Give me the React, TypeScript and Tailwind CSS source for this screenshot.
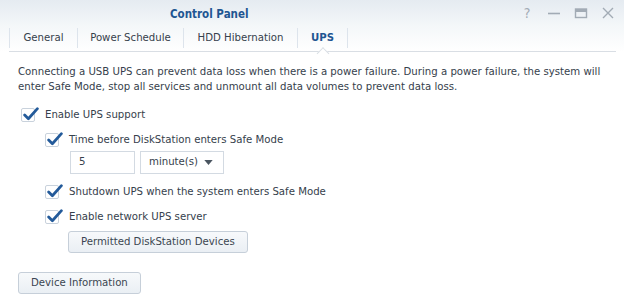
import React from "react";

function Check({ label }: { label: string }) {
  return (
    <div className="flex h-[16px] items-center gap-[10px]">
      <span className="relative h-[14px] w-[14px] shrink-0 rounded-[2px] border border-[#c9d2dc] bg-white">
        <svg
          viewBox="0 0 16 16"
          className="absolute left-[0px] top-[-3px] h-[17px] w-[17px]"
        >
          <path
            d="M2.5 8.5 L6 12 L14.5 2.5"
            fill="none"
            stroke="#235a9a"
            strokeWidth="2.6"
            strokeLinecap="round"
            strokeLinejoin="round"
          />
        </svg>
      </span>
      <span>{label}</span>
    </div>
  );
}

function Btn({ children }: { children: React.ReactNode }) {
  return (
    <button className="h-[22px] rounded-[3px] border border-[#c6cfd9] bg-gradient-to-b from-[#f7f9fb] to-[#eaeff4] px-[12px] text-[11.3px] leading-none text-[#3b4651]">
      {children}
    </button>
  );
}

export default function App() {
  const tabs = [
    { name: "General", w: "w-[68px]" },
    { name: "Power Schedule", w: "w-[106px]" },
    { name: "HDD Hibernation", w: "w-[114px]" },
    { name: "UPS", w: "w-[50px]", active: true },
  ];

  return (
    <div className="h-[305px] w-[624px] overflow-hidden bg-white font-['DejaVu_Sans_Condensed','DejaVu_Sans',sans-serif] text-[11.3px] text-[#36414c]">
      {/* Header */}
      <div className="bg-gradient-to-b from-[#e5ebf1] via-[#f4f7f9] to-white">
        <div className="relative flex h-[27px] items-center pl-[170px]">
          <span className="mt-[2px] text-[11.5px] font-bold text-[#1f5692]">Control Panel</span>
          <div className="absolute right-[9px] top-[6px] flex items-center gap-[13px] text-[#a2abb5]">
            <span className="w-[14px] text-center text-[14px] leading-[14px]">?</span>
            <svg viewBox="0 0 14 14" className="h-[14px] w-[14px]">
              <path d="M1 7.5 H13" stroke="currentColor" strokeWidth="1.6" />
            </svg>
            <svg viewBox="0 0 14 14" className="h-[14px] w-[14px]">
              <rect x="1.5" y="3" width="11" height="8.5" fill="none" stroke="currentColor" strokeWidth="1.4" />
              <rect x="1.5" y="3" width="11" height="3" fill="currentColor" />
            </svg>
            <svg viewBox="0 0 14 14" className="h-[14px] w-[14px]">
              <path d="M2 2 L12 12 M12 2 L2 12" stroke="currentColor" strokeWidth="1.4" />
            </svg>
          </div>
        </div>

        {/* Tabs */}
        <div className="relative ml-[9px] mr-[8px] flex h-[25px] border-b border-[#d9dee4]">
          <div className="mt-[1px] flex h-[20px] self-start border-l border-[#dde4ec]">
            {tabs.map((t) => (
              <div
                key={t.name}
                className={`relative flex items-center justify-center border-r border-[#dde4ec] ${t.w} ${
                  t.active ? "font-bold text-[#1f5692]" : "text-[#36414c]"
                }`}
              >
                {t.name}
                {t.active && (
                  <span className="absolute bottom-[-10px] left-1/2 h-[9px] w-[9px] -translate-x-1/2 rotate-45 border-l border-t border-[#d9dee4] bg-white" />
                )}
              </div>
            ))}
          </div>
        </div>
      </div>

      {/* Body */}
      <div className="flex flex-col px-[18px] pt-[12px]">
        <p className="leading-[15px]">
          Connecting a USB UPS can prevent data loss when there is a power failure. During a power failure, the system will enter Safe Mode, stop all services and unmount all data volumes to prevent data loss.
        </p>

        <div className="mt-[13px] pl-[3px]">
          <Check label="Enable UPS support" />
        </div>

        <div className="mt-[9px] flex flex-col pl-[27px]">
          <Check label="Time before DiskStation enters Safe Mode" />
          <div className="mt-[3px] flex gap-[5px] pl-[25px]">
            <div className="flex h-[23px] w-[65px] items-center border border-[#d3dae2] px-[8px]">5</div>
            <div className="flex h-[23px] w-[84px] items-center justify-between border border-[#d3dae2] pl-[8px] pr-[10px]">
              <span>minute(s)</span>
              <svg viewBox="0 0 10 6" className="h-[5px] w-[9px]">
                <path d="M0 0 H10 L5 6 Z" fill="#4a5560" />
              </svg>
            </div>
          </div>
          <div className="mt-[10px]">
            <Check label="Shutdown UPS when the system enters Safe Mode" />
          </div>
          <div className="mt-[9px]">
            <Check label="Enable network UPS server" />
          </div>
          <div className="mt-[6px] pl-[23px]">
            <Btn>Permitted DiskStation Devices</Btn>
          </div>
        </div>

        <div className="mt-[19px]">
          <Btn>Device Information</Btn>
        </div>
      </div>
    </div>
  );
}
